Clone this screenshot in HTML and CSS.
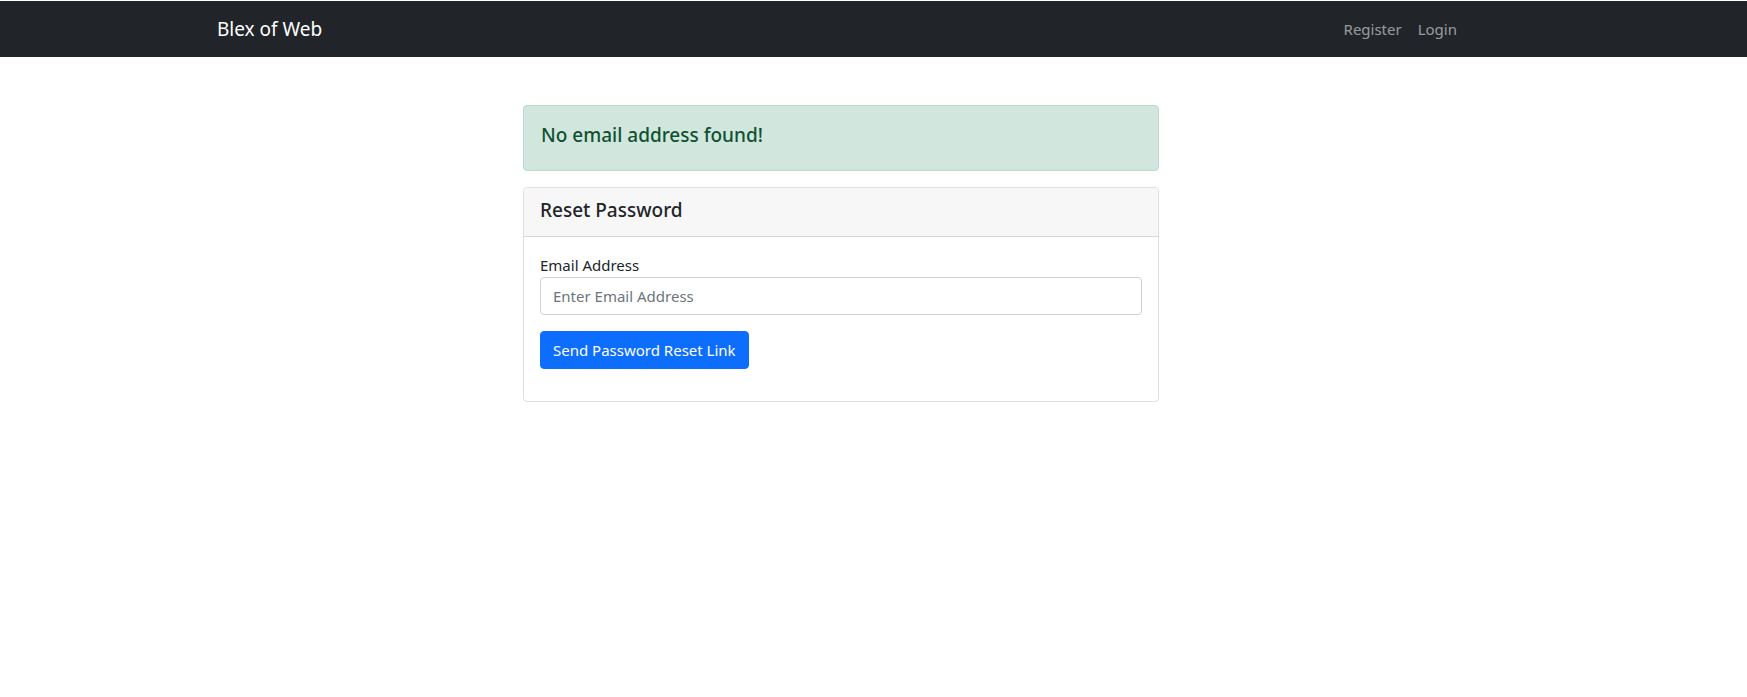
FILE: index.html
```html
<!DOCTYPE html>
<html lang="en">
<head>
<meta charset="utf-8">
<title>Reset Password - Blex of Web</title>
<link rel="stylesheet" href="styles.css">
</head>
<body>
<nav class="navbar">
  <div class="frame">
    <div class="nav-container">
      <a class="brand" href="#">Blex of Web</a>
      <ul class="nav-links">
        <li><a class="nav-link" href="#">Register</a></li>
        <li><a class="nav-link" href="#">Login</a></li>
      </ul>
    </div>
  </div>
</nav>
<main class="frame">
  <div class="container">
    <div class="column">
      <div class="alert">
        <h4 class="alert-text">No email address found!</h4>
      </div>
      <div class="card">
        <div class="card-header">
          <h5 class="card-title">Reset Password</h5>
        </div>
        <div class="card-body">
          <form>
            <div class="group">
              <label for="email">Email Address</label>
              <input id="email" class="form-control" type="email" placeholder="Enter Email Address">
            </div>
            <div class="group">
              <button type="button" class="btn">Send Password Reset Link</button>
            </div>
          </form>
        </div>
      </div>
    </div>
  </div>
</main>
</body>
</html>
```

FILE: styles.css
```css
* { box-sizing: border-box; }

html, body {
  margin: 0;
  background: #fff;
}

body {
  padding-top: 1px;
  font-family: "Noto Sans", "Open Sans", sans-serif;
  font-size: 16px;
  line-height: 1.5;
  color: #212529;
}

.frame {
  width: 1682px;
}

.navbar {
  background: #212529;
  padding: 8px 0;
}

.nav-container {
  width: 1272px;
  margin: 0 auto;
  padding: 0 12px;
  display: flex;
  align-items: center;
  justify-content: space-between;
}

.brand {
  color: #fff;
  text-decoration: none;
  font-size: 19px;
  line-height: 30px;
  padding: 5px 0;
}

.nav-links {
  list-style: none;
  margin: 0;
  padding: 0;
  display: flex;
}

.nav-link {
  display: block;
  padding: 8px;
  color: rgba(255, 255, 255, 0.55);
  text-decoration: none;
  font-size: 15px;
  line-height: 24px;
}

.container {
  width: 1320px;
  margin: 0 auto;
  padding: 0 12px;
}

.column {
  width: 636px;
  margin: 48px auto 0;
}

.alert {
  background: #d1e7dd;
  border: 1px solid #badbcc;
  border-radius: 4px;
  color: #0f5132;
  padding: 16px 17px;
  margin-bottom: 16px;
}

.alert-text {
  margin: 0 0 7px;
  padding-top: 1px;
  font-size: 19px;
  font-weight: 500;
  line-height: 24px;
}

.card {
  border: 1px solid rgba(0, 0, 0, 0.125);
  border-radius: 4px;
}

.card-header {
  background: #f7f7f7;
  border-bottom: 1px solid rgba(0, 0, 0, 0.125);
  padding: 8px 16px;
  border-radius: 3px 3px 0 0;
}

.card-title {
  margin: 0 0 6px;
  padding-top: 2px;
  font-size: 19px;
  font-weight: 500;
  line-height: 24px;
}

.card-body {
  padding: 16px;
}

.group {
  margin-bottom: 16px;
}

label {
  display: inline-block;
  font-size: 15px;
  line-height: 24px;
}

.form-control {
  display: block;
  width: 100%;
  height: 38px;
  padding: 6px 12px;
  font-family: inherit;
  font-size: 15px;
  line-height: 24px;
  color: #212529;
  border: 1px solid #ced4da;
  border-radius: 4px;
  background: #fff;
}

.form-control::placeholder {
  color: #6c757d;
}

.btn {
  display: inline-block;
  height: 38px;
  padding: 6px 12px;
  font-family: inherit;
  font-size: 15px;
  line-height: 24px;
  color: #fff;
  background: #0d6efd;
  border: 1px solid #0d6efd;
  border-radius: 4px;
}
```
